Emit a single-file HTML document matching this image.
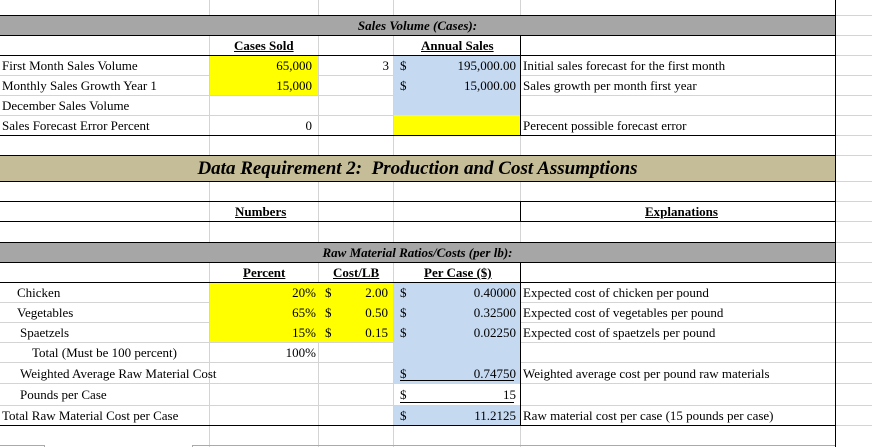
<!DOCTYPE html>
<html><head><meta charset="utf-8"><style>
body{margin:0;width:872px;height:447px;overflow:hidden;background:#fff;position:relative;font-family:"Liberation Serif","Times New Roman",serif;font-size:13px;color:#000}
div{position:absolute;box-sizing:border-box}
.h{height:1px;background:#d4d4d4;left:0;width:872px}
.v{width:1px;background:#d4d4d4}
.k{background:#000}
.t{white-space:nowrap;line-height:20px;height:20px}
.r{text-align:right}
.b{font-weight:bold;text-decoration:underline}
.bi{font-weight:bold;font-style:italic}
</style></head><body>
<div class="h" style="top:15px"></div><div class="h" style="top:35px"></div><div class="h" style="top:55px"></div>
<div class="h" style="top:75px"></div><div class="h" style="top:95px"></div><div class="h" style="top:115px"></div>
<div class="h" style="top:135px"></div><div class="h" style="top:155px"></div><div class="h" style="top:181px"></div>
<div class="h" style="top:201px"></div><div class="h" style="top:221px"></div><div class="h" style="top:242px"></div>
<div class="h" style="top:262px"></div><div class="h" style="top:282px"></div><div class="h" style="top:302px"></div>
<div class="h" style="top:322px"></div><div class="h" style="top:342px"></div><div class="h" style="top:362px"></div>
<div class="h" style="top:383px"></div><div class="h" style="top:405px"></div><div class="h" style="top:425px"></div>
<div class="v" style="left:209px;top:0;height:447px"></div>
<div class="v" style="left:318px;top:0;height:447px"></div>
<div class="v" style="left:393px;top:0;height:447px"></div>
<div class="v" style="left:520px;top:0;height:447px"></div>
<div style="left:0;top:15px;width:835px;height:20px;background:#a6a6a6"></div>
<div style="left:0;top:155px;width:835px;height:26px;background:#c4bd97"></div>
<div style="left:0;top:242px;width:835px;height:20px;background:#a6a6a6"></div>
<div style="left:210px;top:56px;width:108px;height:39px;background:#ffff00"></div>
<div style="left:394px;top:56px;width:126px;height:59px;background:#c5d9f1"></div>
<div style="left:394px;top:115px;width:126px;height:20px;background:#ffff00"></div>
<div style="left:210px;top:283px;width:183px;height:59px;background:#ffff00"></div>
<div style="left:394px;top:283px;width:126px;height:100px;background:#c5d9f1"></div>
<div style="left:394px;top:406px;width:126px;height:19px;background:#c5d9f1"></div>
<div class="k" style="left:0;top:15px;width:836px;height:1px"></div>
<div class="k" style="left:0;top:35px;width:836px;height:1px"></div>
<div class="k" style="left:0;top:55px;width:836px;height:1px"></div>
<div class="k" style="left:0;top:135px;width:836px;height:1px"></div>
<div class="k" style="left:0;top:155px;width:836px;height:1px"></div>
<div class="k" style="left:0;top:181px;width:836px;height:1px"></div>
<div class="k" style="left:0;top:201px;width:836px;height:1px"></div>
<div class="k" style="left:0;top:221px;width:836px;height:1px"></div>
<div class="k" style="left:0;top:242px;width:836px;height:1px"></div>
<div class="k" style="left:0;top:262px;width:836px;height:1px"></div>
<div class="k" style="left:0;top:282px;width:836px;height:1px"></div>
<div class="k" style="left:0;top:425px;width:836px;height:1px"></div>
<div class="k" style="left:835px;top:0;width:1px;height:447px"></div>
<div class="k" style="left:520px;top:35px;width:1px;height:100px"></div>
<div class="k" style="left:520px;top:201px;width:1px;height:20px"></div>
<div class="k" style="left:520px;top:262px;width:1px;height:163px"></div>
<div class="k" style="left:400px;top:380px;width:114px;height:1px"></div>
<div class="k" style="left:400px;top:402px;width:114px;height:1px"></div>
<div style="left:0;top:445px;width:45px;height:2px;border-top:1px solid #aaa;border-right:1px solid #aaa"></div>
<div style="left:192px;top:445px;width:643px;height:2px;border-top:1px solid #aaa;border-left:1px solid #aaa"></div>
<div class="t bi" style="left:0;top:16px;width:835px;text-align:center">Sales Volume (Cases):</div>
<div class="t b" style="left:234px;top:36px">Cases Sold</div>
<div class="t b" style="left:421px;top:36px">Annual Sales</div>
<div class="t" style="left:2px;top:56px">First Month Sales Volume</div>
<div class="t" style="left:2px;top:76px">Monthly Sales Growth Year 1</div>
<div class="t" style="left:2px;top:96px">December Sales Volume</div>
<div class="t" style="left:2px;top:116px">Sales Forecast Error Percent</div>
<div class="t r" style="left:209px;top:56px;width:103px">65,000</div>
<div class="t r" style="left:209px;top:76px;width:103px">15,000</div>
<div class="t r" style="left:209px;top:116px;width:103px">0</div>
<div class="t r" style="left:318px;top:56px;width:71px">3</div>
<div class="t" style="left:400px;top:56px">$</div>
<div class="t" style="left:400px;top:76px">$</div>
<div class="t r" style="left:393px;top:56px;width:123px">195,000.00</div>
<div class="t r" style="left:393px;top:76px;width:123px">15,000.00</div>
<div class="t" style="left:523px;top:56px">Initial sales forecast for the first month</div>
<div class="t" style="left:523px;top:76px">Sales growth per month first year</div>
<div class="t" style="left:523px;top:116px">Perecent possible forecast error</div>
<div class="t bi" style="left:0;top:156px;width:835px;text-align:center;font-size:19px;line-height:25px;height:25px">Data Requirement 2:&nbsp; Production and Cost Assumptions</div>
<div class="t b" style="left:235px;top:202px">Numbers</div>
<div class="t b" style="left:645px;top:202px">Explanations</div>
<div class="t bi" style="left:0;top:243px;width:835px;text-align:center">Raw Material Ratios/Costs (per lb):</div>
<div class="t b" style="left:243px;top:263px">Percent</div>
<div class="t b" style="left:333px;top:263px">Cost/LB</div>
<div class="t b" style="left:424px;top:263px">Per Case ($)</div>
<div class="t" style="left:17px;top:283px">Chicken</div>
<div class="t" style="left:17px;top:303px">Vegetables</div>
<div class="t" style="left:20px;top:323px">Spaetzels</div>
<div class="t" style="left:32px;top:343px">Total (Must be 100 percent)</div>
<div class="t" style="left:20px;top:363px;line-height:22px">Weighted Average Raw Material Cost</div>
<div class="t" style="left:20px;top:385px">Pounds per Case</div>
<div class="t" style="left:2px;top:406px">Total Raw Material Cost per Case</div>
<div class="t r" style="left:209px;top:283px;width:107px">20%</div>
<div class="t r" style="left:209px;top:303px;width:107px">65%</div>
<div class="t r" style="left:209px;top:323px;width:107px">15%</div>
<div class="t r" style="left:209px;top:343px;width:107px">100%</div>
<div class="t" style="left:325px;top:283px">$</div><div class="t" style="left:325px;top:303px">$</div><div class="t" style="left:325px;top:323px">$</div>
<div class="t r" style="left:318px;top:283px;width:70px">2.00</div>
<div class="t r" style="left:318px;top:303px;width:70px">0.50</div>
<div class="t r" style="left:318px;top:323px;width:70px">0.15</div>
<div class="t" style="left:400px;top:283px">$</div><div class="t" style="left:400px;top:303px">$</div><div class="t" style="left:400px;top:323px">$</div>
<div class="t" style="left:400px;top:363px;line-height:22px">$</div><div class="t" style="left:400px;top:385px">$</div><div class="t" style="left:400px;top:406px">$</div>
<div class="t r" style="left:393px;top:283px;width:123px">0.40000</div>
<div class="t r" style="left:393px;top:303px;width:123px">0.32500</div>
<div class="t r" style="left:393px;top:323px;width:123px">0.02250</div>
<div class="t r" style="left:393px;top:363px;width:123px;line-height:22px">0.74750</div>
<div class="t r" style="left:393px;top:385px;width:123px">15</div>
<div class="t r" style="left:393px;top:406px;width:123px">11.2125</div>
<div class="t" style="left:523px;top:283px">Expected cost of chicken per pound</div>
<div class="t" style="left:523px;top:303px">Expected cost of vegetables per pound</div>
<div class="t" style="left:523px;top:323px">Expected cost of spaetzels per pound</div>
<div class="t" style="left:523px;top:363px;line-height:22px">Weighted average cost per pound raw materials</div>
<div class="t" style="left:523px;top:406px">Raw material cost per case (15 pounds per case)</div>
</body></html>
